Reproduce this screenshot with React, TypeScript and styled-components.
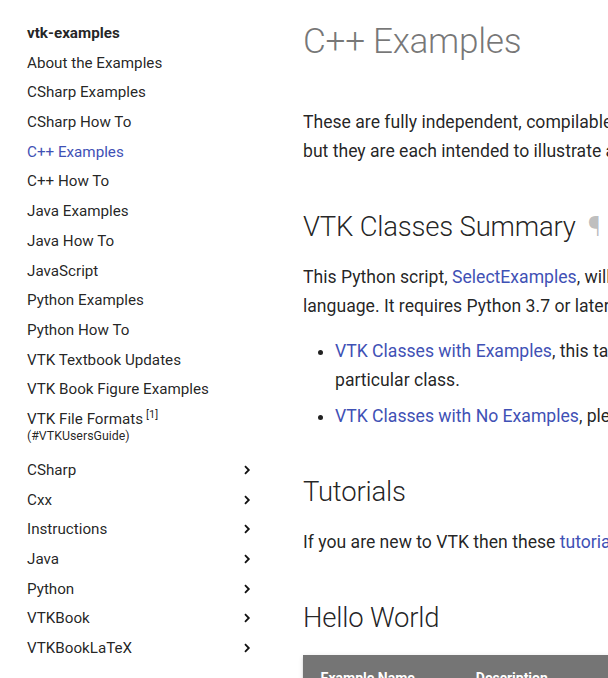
import React from 'react'
import styled, { createGlobalStyle } from 'styled-components'

const GlobalStyle = createGlobalStyle`
  html, body {
    margin: 0;
    padding: 0;
    background: #fff;
  }
  body {
    width: 608px;
    height: 678px;
    overflow: hidden;
    font-family: Roboto, "Liberation Sans", sans-serif;
    color: rgba(0, 0, 0, 0.87);
    -webkit-font-smoothing: antialiased;
  }
`

const Page = styled.div`
  display: flex;
  align-items: flex-start;
  padding-left: 27px;
  width: 1200px;
`

const Sidebar = styled.nav`
  flex: 0 0 226px;
  padding-top: 23px;
`

const NavTitle = styled.div`
  font-size: 15.2px;
  line-height: 20px;
  font-weight: 700;
`

const NavList = styled.ul`
  list-style: none;
  margin: 0;
  padding: 0;
`

const NavItem = styled.li<{ $gap?: number }>`
  margin-top: ${p => p.$gap ?? 9.7}px;
  font-size: 15.2px;
  line-height: 20px;
`

const NavLink = styled.a<{ $active?: boolean }>`
  display: flex;
  align-items: center;
  justify-content: space-between;
  color: ${p => (p.$active ? '#3f51b5' : 'rgba(0, 0, 0, 0.87)')};
  text-decoration: none;
`

const Sup = styled.sup`
  font-size: 11px;
  line-height: 0;
  vertical-align: 6px;
  margin-left: 3px;
`

const NavNote = styled.div`
  font-size: 12.4px;
  line-height: 14px;
`

const Chevron = styled.svg`
  width: 10px;
  height: 10px;
  margin-right: 1px;
  flex: none;
`

const Content = styled.main`
  flex: 0 0 760px;
  margin-left: 50px;
  font-size: 17.6px;
  line-height: 29px;
`

const Title = styled.h1`
  margin: 18px 0 44px;
  font-size: 35.2px;
  line-height: 46px;
  font-weight: 300;
  letter-spacing: -0.3px;
  color: rgba(0, 0, 0, 0.54);
`

const Heading = styled.h2`
  margin: 42px 0 16.5px;
  font-size: 27.5px;
  line-height: 38px;
  font-weight: 300;
  letter-spacing: -0.2px;
`

const HeaderLink = styled.a`
  margin-left: 12px;
  color: rgba(0, 0, 0, 0.26);
  text-decoration: none;
`

const Para = styled.p`
  margin: 16.5px 0;
`

const Link = styled.a`
  color: #3f51b5;
  text-decoration: none;
`

const Bullets = styled.ul`
  margin: 16px 0;
  padding-left: 32px;
`

const Bullet = styled.li`
  margin-bottom: 7px;
`

const Table = styled.table`
  margin-top: 18px;
  border-collapse: collapse;
  border-radius: 2px;
  box-shadow: 0 2px 2px 0 rgba(0, 0, 0, 0.14), 0 1px 5px 0 rgba(0, 0, 0, 0.12);
  font-size: 14px;
`

const Th = styled.th<{ $width: number }>`
  width: ${p => p.$width}px;
  padding: 13px 17.6px;
  background: #757575;
  color: #fff;
  font-weight: 700;
  text-align: left;
  line-height: 20px;
`

const ChevronIcon = () => (
  <Chevron viewBox="0 0 10 10">
    <path d="M3 1.2 L6.8 5 L3 8.8" fill="none" stroke="#111" strokeWidth="1.8" />
  </Chevron>
)

const pages = [
  'About the Examples',
  'CSharp Examples',
  'CSharp How To',
  'C++ Examples',
  'C++ How To',
  'Java Examples',
  'Java How To',
  'JavaScript',
  'Python Examples',
  'Python How To',
  'VTK Textbook Updates',
  'VTK Book Figure Examples',
]

const sections = ['CSharp', 'Cxx', 'Instructions', 'Java', 'Python', 'VTKBook', 'VTKBookLaTeX']

const App: React.FC = () => {
  return (
    <>
      <GlobalStyle />
      <Page>
        <Sidebar>
          <NavTitle>vtk-examples</NavTitle>
          <NavList>
            {pages.map(page => (
              <NavItem key={page}>
                <NavLink href="#" $active={page === 'C++ Examples'}>
                  {page}
                </NavLink>
              </NavItem>
            ))}
            <NavItem>
              <NavLink href="#">
                <span>
                  VTK File Formats<Sup>[1]</Sup>
                </span>
              </NavLink>
              <NavNote>(#VTKUsersGuide)</NavNote>
            </NavItem>
            {sections.map((section, i) => (
              <NavItem key={section} $gap={i === 0 ? 17 : undefined}>
                <NavLink href="#">
                  <span>{section}</span>
                  <ChevronIcon />
                </NavLink>
              </NavItem>
            ))}
          </NavList>
        </Sidebar>

        <Content>
          <Title>C++ Examples</Title>
          <Para>
            These are fully independent, compilable examples. There is significant overlap in the examples,
            <br />
            but they are each intended to illustrate a different concept and be fully stand alone compilable.
          </Para>

          <Heading>
            VTK Classes Summary<HeaderLink href="#">¶</HeaderLink>
          </Heading>
          <Para>
            This Python script, <Link href="#">SelectExamples</Link>, will let you select examples based on a VTK Class and
            <br />
            language. It requires Python 3.7 or later.
          </Para>
          <Bullets>
            <Bullet>
              <Link href="#">VTK Classes with Examples</Link>, this table is really useful when searching for examples using a
              <br />
              particular class.
            </Bullet>
            <Bullet>
              <Link href="#">VTK Classes with No Examples</Link>, please add examples in your area of expertise!
            </Bullet>
          </Bullets>

          <Heading>Tutorials</Heading>
          <Para>
            If you are new to VTK then these <Link href="#">tutorials</Link> will help to get you started.
          </Para>

          <Heading>Hello World</Heading>
          <Table>
            <thead>
              <tr>
                <Th $width={120}>Example Name</Th>
                <Th $width={300}>Description</Th>
                <Th $width={80}>Image</Th>
              </tr>
            </thead>
          </Table>
        </Content>
      </Page>
    </>
  )
}

export default App
